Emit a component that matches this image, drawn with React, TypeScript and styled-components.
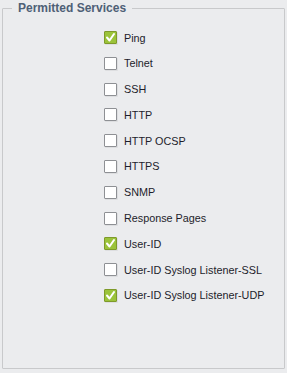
import React from "react";
import styled, { createGlobalStyle } from "styled-components";

const Global = createGlobalStyle`
  html, body { margin: 0; padding: 0; background: #ebecee; }
  body { font-family: "Liberation Sans", Arial, sans-serif; }
`;

const Page = styled.div`
  width: 287px;
  height: 373px;
  box-sizing: border-box;
  padding: 2px 2px 4px 2px;
  background: #ebecee;
`;

const Fieldset = styled.fieldset`
  margin: 0;
  height: 100%;
  box-sizing: border-box;
  border: 1px solid #c8c9cb;
  border-radius: 1px;
  padding: 0;
  min-width: 0;
`;

const Legend = styled.legend`
  margin-left: 9px;
  padding: 0 6px;
  font-size: 12px;
  font-weight: bold;
  color: #4e6076;
  line-height: 13px;
`;

const List = styled.div`
  display: flex;
  flex-direction: column;
  gap: 12.8px;
  padding: 16px 0 0 101px;
`;

const Row = styled.label`
  display: flex;
  align-items: center;
  gap: 7px;
  height: 13px;
  font-size: 10.8px;
  color: #1d1d2b;
`;

const Box = styled.span<{ $checked: boolean }>`
  width: 13px;
  height: 13px;
  box-sizing: border-box;
  border: 1px solid ${(p) => (p.$checked ? "#7e9a2a" : "#8e9094")};
  background: ${(p) => (p.$checked ? "#9bc33a" : "#ffffff")};
  border-radius: 1px;
  display: flex;
  align-items: center;
  justify-content: center;
  box-shadow: 1px 1px 0 rgba(0, 0, 0, 0.06);
`;

const items: [string, boolean][] = [
  ["Ping", true],
  ["Telnet", false],
  ["SSH", false],
  ["HTTP", false],
  ["HTTP OCSP", false],
  ["HTTPS", false],
  ["SNMP", false],
  ["Response Pages", false],
  ["User-ID", true],
  ["User-ID Syslog Listener-SSL", false],
  ["User-ID Syslog Listener-UDP", true],
];

export default function App() {
  return (
    <Page>
      <Global />
      <Fieldset>
        <Legend>Permitted Services</Legend>
        <List>
          {items.map(([name, checked]) => (
            <Row key={name}>
              <Box $checked={checked}>
                {checked && (
                  <svg width="11" height="11" viewBox="0 0 11 11">
                    <path d="M2 5.5 L4.5 8.5 L9 2" fill="none" stroke="#ffffff" strokeWidth="2" strokeLinecap="round" strokeLinejoin="round" />
                  </svg>
                )}
              </Box>
              {name}
            </Row>
          ))}
        </List>
      </Fieldset>
    </Page>
  );
}
